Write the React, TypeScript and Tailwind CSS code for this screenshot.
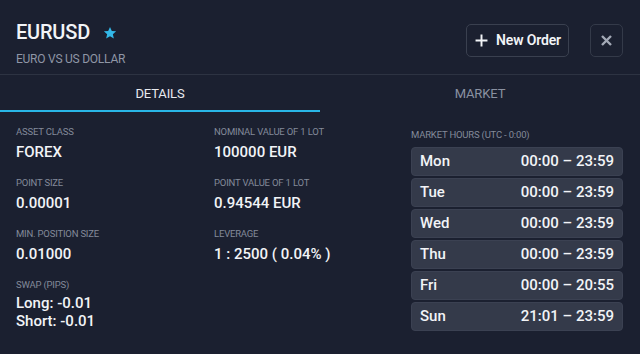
import React from "react";

const rows: [string, string][] = [
  ["Mon", "00:00 – 23:59"],
  ["Tue", "00:00 – 23:59"],
  ["Wed", "00:00 – 23:59"],
  ["Thu", "00:00 – 23:59"],
  ["Fri", "00:00 – 20:55"],
  ["Sun", "21:01 – 23:59"],
];

function Item({ label, value }: { label: string; value: string }) {
  return (
    <div className="flex flex-col">
      <div className="text-[9.5px] leading-[12px] tracking-[-0.02em] text-[#838a9a] uppercase">{label}</div>
      <div className="mt-1 text-[15px] leading-[20px] font-medium text-[#f2f4f7]">{value}</div>
    </div>
  );
}

export default function App() {
  return (
    <div
      className="h-screen w-full bg-[#1b2030] text-white overflow-hidden"
      style={{ fontFamily: "Roboto, 'Liberation Sans', sans-serif" }}
    >
      {/* Header */}
      <div className="h-[75px] border-b border-[#2d3342] pl-4 pr-[17px] pt-[18px] flex justify-between items-start">
        <div className="flex flex-col">
          <div className="flex items-center">
            <span className="text-[20px] leading-[28px] font-medium text-[#f2f4f7] tracking-[-0.01em]">EURUSD</span>
            <svg className="ml-[13px] mt-[1px]" width="14" height="14" viewBox="0 0 24 24">
              <path
                d="M12 1.5l3.1 6.9 7.4.7-5.6 5 1.7 7.4L12 17.6l-6.6 3.9 1.7-7.4-5.6-5 7.4-.7z"
                fill="#33b8e8"
              />
            </svg>
          </div>
          <div className="mt-[5px] text-[12px] leading-[16px] tracking-[-0.02em] text-[#8f96a6]">EURO VS US DOLLAR</div>
        </div>
        <div className="mt-[6px] flex items-center gap-[21px]">
          <button className="h-[33px] w-[103px] rounded-[5px] border border-[#3a404f] flex items-center pl-[8px]">
            <svg width="13" height="13" viewBox="0 0 12 12">
              <path d="M6 0.5v11M0.5 6h11" stroke="#f2f4f7" strokeWidth="1.8" />
            </svg>
            <span className="ml-[8px] text-[14px] font-semibold text-[#f2f4f7] tracking-[-0.01em]">New Order</span>
          </button>
          <button className="h-[33px] w-[33px] rounded-[5px] border border-[#343a49] flex items-center justify-center">
            <svg width="11" height="11" viewBox="0 0 11 11">
              <path d="M1 1l9 9M10 1l-9 9" stroke="#a3a9b6" strokeWidth="2.4" />
            </svg>
          </button>
        </div>
      </div>

      {/* Tabs */}
      <div className="flex h-[37px]">
        <div className="w-1/2 h-full border-b-2 border-[#29b6e6] flex items-center justify-center pt-[2px] text-[13px] tracking-[-0.01em] text-[#e8eaef]">
          DETAILS
        </div>
        <div className="w-1/2 h-full flex items-center justify-center text-[13px] tracking-[-0.01em] text-[#8a91a1]">
          MARKET
        </div>
      </div>

      {/* Content */}
      <div className="flex pl-4 pr-[17px] pt-[14px]">
        <div className="flex-1 flex flex-col">
          <div className="grid grid-cols-[198px_1fr] gap-y-[15px]">
            <Item label="Asset Class" value="FOREX" />
            <Item label="Nominal Value of 1 Lot" value="100000 EUR" />
            <Item label="Point Size" value="0.00001" />
            <Item label="Point Value of 1 Lot" value="0.94544 EUR" />
            <Item label="Min. Position Size" value="0.01000" />
            <Item label="Leverage" value="1 : 2500 ( 0.04% )" />
            <div className="flex flex-col">
              <div className="text-[9.5px] leading-[12px] tracking-[-0.02em] text-[#838a9a]">SWAP (PIPS)</div>
              <div className="mt-[3px] text-[15px] leading-[18px] font-medium text-[#f2f4f7]">Long: -0.01</div>
              <div className="text-[15px] leading-[18px] font-medium text-[#f2f4f7]">Short: -0.01</div>
            </div>
          </div>
        </div>
        <div className="w-[212px] flex flex-col pt-[3px]">
          <div className="text-[9.5px] leading-[12px] tracking-[-0.02em] text-[#838a9a]">MARKET HOURS (UTC - 0:00)</div>
          <div className="mt-[6px] flex flex-col gap-[2px]">
            {rows.map(([d, t]) => (
              <div
                key={d}
                className="h-[29px] rounded-[4px] bg-[#343a4a] border border-[#3b4152] flex items-center justify-between px-[8px] text-[15px] font-medium text-[#f2f4f7]"
              >
                <span>{d}</span>
                <span>{t}</span>
              </div>
            ))}
          </div>
        </div>
      </div>
    </div>
  );
}
